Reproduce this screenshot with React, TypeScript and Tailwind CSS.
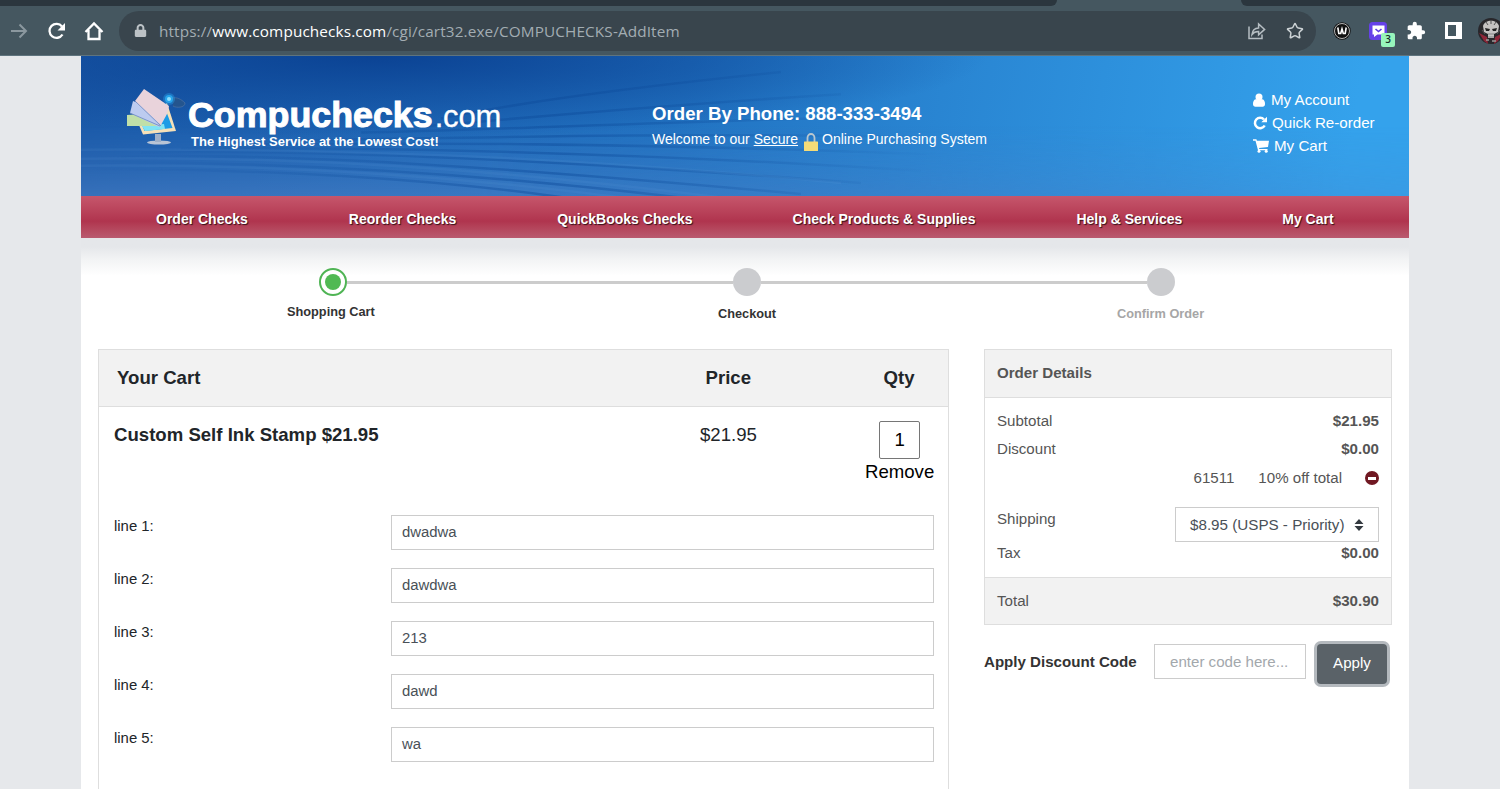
import { Star } from "lucide-react";
import { FaLock } from "react-icons/fa";
import { MdExtension } from "react-icons/md";

const navItems = [
    { label: "Order Checks", margin: "ml-[75px]" },
    { label: "Reorder Checks", margin: "ml-[101px]" },
    { label: "QuickBooks Checks", margin: "ml-[101px]" },
    { label: "Check Products & Supplies", margin: "ml-[100px]" },
    { label: "Help & Services", margin: "ml-[101px]" },
    { label: "My Cart", margin: "ml-[100px]" },
];

const stampLines = [
    { label: "line 1:", value: "dwadwa" },
    { label: "line 2:", value: "dawdwa" },
    { label: "line 3:", value: "213" },
    { label: "line 4:", value: "dawd" },
    { label: "line 5:", value: "wa" },
];

function BrowserBar() {
    return (
        <div className="h-14 border-b border-[#5f747e] bg-[#455760]">
            <div className="flex h-1.5 justify-between">
                <div className="w-[1057px] rounded-br-lg bg-[#2b363e]" />
                <div className="w-[259px] rounded-bl-lg bg-[#2b363e]" />
            </div>
            <div className="flex h-[49px] items-center overflow-hidden pl-2.5">
                <svg viewBox="0 0 18 18" className="size-[18px] shrink-0 fill-none stroke-[#8b989f] stroke-2">
                    <path d="M1 9h15M9.500 2.500L16 9l-6.500 6.500" />
                </svg>
                <svg viewBox="0 0 18 18" className="ml-5 size-[18px] shrink-0">
                    <path d="M14.500 12.500A7 7 0 1 1 14 4.500" fill="none" stroke="#fff" strokeWidth="2.300" />
                    <path d="M17 1v7.500H9.500z" fill="#fff" />
                </svg>
                <svg viewBox="0 0 20 20" className="ml-[18px] size-[20px] shrink-0 fill-none stroke-white stroke-[2.3]">
                    <path d="M1.500 11L10 2.500l8.500 8.500M4.500 9v9h11V9" />
                </svg>
                <div className="ml-[15px] flex h-10 w-[1197px] shrink-0 items-center rounded-full bg-[#39454d] pr-3 pl-[15px]">
                    <FaLock className="size-[13px] shrink-0 text-[#bcc2c6]" />
                    <p className="ml-3 font-['Open_Sans',sans-serif] text-[15.300px] leading-5 tracking-[0.13px] whitespace-nowrap text-[#a3adb3]">
                        https://<span className="font-medium text-white">www.compuchecks.com</span>
                        /cgi/cart32.exe/COMPUCHECKS-AddItem
                    </p>
                    <svg viewBox="0 0 18 18" className="ml-auto size-[18px] fill-none stroke-[#b5bdc2] stroke-[1.5]">
                        <path d="M1 4.500v12h13v-4" />
                        <path d="M4 12.500c.4-4.600 2.700-6.400 6.600-6.600V2l6 5.400-6 5.400V9.400C7.500 9.300 5.600 10.200 4 12.500z" />
                    </svg>
                    <Star className="ml-5 size-[18px] text-[#cdd3d6]" strokeWidth={2} strokeLinejoin="miter" />
                </div>
                <svg viewBox="0 0 18 18" className="ml-[17px] size-[18px] shrink-0">
                    <circle cx="9" cy="9" r="8.700" fill="#111" />
                    <circle cx="9" cy="9" r="7.500" fill="none" stroke="#ddd" strokeWidth=".8" />
                    <path d="M4.800 5.500l1 6h1.900L9 7l1.300 4.500h1.900l1-6" fill="none" stroke="#fff" strokeWidth="1.600" />
                </svg>
                <div className="relative ml-[18px] size-[20px] shrink-0">
                    <svg viewBox="0 0 20 20" className="size-[20px]">
                        <rect x="0" y="1" width="18" height="18" rx="3.500" fill="#6541e8" />
                        <path d="M3.500 4.500h12v9h-7l-3.500 2.500v-2.500h-1.500z" fill="#fff" />
                        <path d="M6.500 8l3 2.500 3-2.500" fill="none" stroke="#5b3be0" strokeWidth="1.600" />
                    </svg>
                    <span className="absolute top-3 left-3 flex h-[14px] w-[14px] items-center justify-center rounded-[2px] bg-[#97f5bb] font-['Open_Sans',sans-serif] text-[10px] font-semibold text-[#16302a]">
                        3
                    </span>
                </div>
                <MdExtension className="ml-[17px] size-[20px] shrink-0 text-white" />
                <div className="ml-[19px] flex h-[17px] w-[17px] shrink-0 border-3 border-white">
                    <div className="ml-auto w-[3px] bg-white" />
                </div>
                <svg viewBox="0 0 26 26" className="ml-4 size-[26px] shrink-0">
                    <circle cx="13" cy="13" r="13" fill="#28272b" />
                    <path d="M1 15l5 8 4 3-1-7zM25 15l-5 8-4 3 1-7z" fill="#8e2638" />
                    <path d="M5 8c2-7 14-7 16 0l-1 6-4 2v4h-6v-4l-4-2z" fill="#c5c3c2" />
                    <path d="M7 10l5 1-1 2-3 0zM19 10l-5 1 1 2 3 0z" fill="#222" />
                    <path d="M8 4l2 3M13 2v4M18 4l-2 3M4 12l3 4M22 12l-3 4" stroke="#555" strokeWidth="1" />
                    <path d="M10 16h6M10 19h6M8 22h3M14 23h4" stroke="#999" strokeWidth="1.500" />
                </svg>
            </div>
        </div>
    );
}

function Waves() {
    return (
        <svg
            viewBox="0 0 1328 139"
            preserveAspectRatio="none"
            className="absolute inset-0 h-full w-full fill-none"
        >
            <defs>
                <linearGradient id="fade" gradientUnits="userSpaceOnUse" x1="0" y1="0" x2="860" y2="0">
                    <stop offset="0" stopColor="#0c4a9a" stopOpacity="0" />
                    <stop offset=".55" stopColor="#0c4a9a" stopOpacity=".45" />
                    <stop offset="1" stopColor="#0c4a9a" stopOpacity="0" />
                </linearGradient>
            </defs>
            <g stroke="url(#fade)" strokeWidth="2.500">
                <path d="M360 62C440 46 540 32 700 16" />
                <path d="M340 70C440 62 560 50 760 38" />
                <path d="M280 76C400 74 560 66 800 60" />
                <path d="M200 84C360 82 560 76 840 80" />
                <path d="M160 88C340 86 540 86 860 98" />
                <path d="M100 92C260 90 520 94 840 114" />
                <path d="M60 96C240 92 480 104 780 126" />
                <path d="M40 100C220 96 440 112 720 137" />
                <path d="M0 106C200 104 400 116 620 143" />
                <path d="M0 113C180 111 360 122 500 143" />
            </g>
            <g stroke="#6ba6e0" strokeOpacity=".1" strokeWidth="2.500">
                <path d="M0 93C240 92 470 98 760 126" />
                <path d="M0 102C220 99 420 112 660 143" />
                <path d="M0 109C200 107 380 119 560 143" />
            </g>
        </svg>
    );
}

function LogoMark() {
    return (
        <svg viewBox="0 0 60 60" className="h-[60px] w-[60px]">
            <ellipse cx="32" cy="53.500" rx="12" ry="2" fill="#b9c5d6" />
            <path d="M28 45h6v8h-6z" fill="#9fb0c8" />
            <path d="M12 36l28-22 9 28-33 3.500z" fill="#f5e0b8" />
            <path d="M15 36l23-17 7.500 20-28 3z" fill="#1c9be6" />
            <path d="M15 37l22-2 1 5-20 2z" fill="#7fe3f5" />
            <path d="M0 26l14-1 20 12H0z" fill="#c0dfa8" />
            <path d="M6 12l15 6 13 18-2 2L3 24z" fill="#bccbf0" />
            <path d="M17 0l25 17-2 8-6 11L8 12z" fill="#e9d3db" />
            <path d="M8 12l26 25M3 24l30 13" stroke="#6a86c0" strokeWidth=".8" />
            <path d="M45 9c5-1 9 1 13 5 0 5-9 5-12 3" fill="#24558e" stroke="#4f72a4" strokeWidth=".7" />
            <circle cx="42" cy="10" r="6" fill="#2bb0f5" opacity=".35" />
            <circle cx="42" cy="10" r="4" fill="#2bb0f5" opacity=".8" />
            <circle cx="42" cy="10" r="2" fill="#8fe0ff" />
        </svg>
    );
}

function Header() {
    return (
        <header className="relative flex h-[140px] bg-linear-[100deg] from-[#1b5aa9] from-0% via-[#2273c2] via-45% to-[#34a2ec] to-95% text-white">
            <div className="absolute inset-0 bg-[radial-gradient(ellipse_at_22%_0%,#0b4394_0%,transparent_42%)]" />
            <div className="absolute inset-0 bg-linear-to-t from-[#4a80c6]/60 from-0% via-[#4a80c6]/30 via-20% to-transparent to-50% [mask-image:linear-gradient(to_right,#000_30%,rgba(0,0,0,0.3))]" />
            <Waves />
            <div className="relative flex w-[571px] pt-[33px] pl-[46px]">
                <LogoMark />
                <div className="pt-1.5 pl-px">
                    <p className="h-[38px] text-[35.800px] leading-[40px] font-bold whitespace-nowrap [-webkit-text-stroke:1px_white]">
                        Compuchecks
                        <span className="ml-0.5 text-[31px] font-normal tracking-[-0.2px] [-webkit-text-stroke:0.3px_white]">
                            .com
                        </span>
                    </p>
                    <p className="pl-[3px] text-[13px] leading-[17px] font-bold whitespace-nowrap">
                        The Highest Service at the Lowest Cost!
                    </p>
                </div>
            </div>
            <div className="relative w-[601px] pt-[47px]">
                <p className="text-[18.650px] leading-[22px] font-bold">Order By Phone: 888-333-3494</p>
                <p className="mt-1 flex text-sm leading-5">
                    <span>
                        Welcome to our <span className="underline">Secure</span>
                    </span>
                    <svg viewBox="0 0 14 18" className="mt-1 mr-1 ml-1.5 h-[18px] w-[14px]">
                        <path d="M3.500 9V5a3.500 4 0 0 1 7 0v4" fill="none" stroke="#b9c7cf" strokeWidth="1.800" />
                        <rect y="8.500" width="14" height="9.500" rx=".5" fill="#f5dc78" />
                    </svg>
                    Online Purchasing System
                </p>
            </div>
            <div className="relative pt-[33px] text-[15.150px] leading-[22.900px]">
                <p className="flex items-center gap-1.5">
                    <svg viewBox="0 0 12 14" className="h-[14px] w-3 fill-white">
                        <circle cx="6" cy="4" r="3.500" />
                        <path d="M2.600 6.300C.8 6.700 0 8.700 0 11c0 1.800 1 2.800 2.400 2.800h7.200C11 13.800 12 12.800 12 11c0-2.300-.8-4.300-2.600-4.700z" />
                    </svg>
                    My Account
                </p>
                <p className="flex items-center gap-[5px]">
                    <svg viewBox="0 0 14 14" className="size-[14px]">
                        <path d="M11.700 9.500A5.200 5.200 0 1 1 11 3.500" fill="none" stroke="#fff" strokeWidth="2.500" />
                        <path d="M14 .8v5.400H8.300z" fill="#fff" />
                    </svg>
                    Quick Re-order
                </p>
                <p className="flex items-center gap-[5px]">
                    <svg viewBox="0 0 16 14" className="h-[14px] w-4 fill-white">
                        <path d="M0 .3h3.400l.5 1.400H16l-1 6.300-9 1 .3 1H14.500v1.300H5L2.500 1.700H0z" />
                        <circle cx="6" cy="12.300" r="1.500" />
                        <circle cx="13.200" cy="12.300" r="1.500" />
                    </svg>
                    My Cart
                </p>
            </div>
        </header>
    );
}

function Steps() {
    return (
        <div className="h-[111px] bg-linear-to-b from-[#e5e7ea] from-8% via-[#f3f4f5] via-20% to-white to-34% pt-[30px]">
            <div className="ml-[237.500px] flex w-[856.500px] items-center">
                <div className="flex size-7 items-center justify-center rounded-full border-2 border-[#4fb454] bg-white">
                    <div className="size-4 rounded-full bg-[#50b953]" />
                </div>
                <div className="h-[3px] flex-1 bg-[#cccccc]" />
                <div className="size-7 rounded-full bg-[#cbcccf]" />
                <div className="h-[3px] flex-1 bg-[#cccccc]" />
                <div className="size-7 rounded-full bg-[#cbcccf]" />
            </div>
            <div className="flex pt-[7px] pl-[206px] text-[12.750px] leading-[18px] font-bold text-[#333]">
                <p className="w-[431px]">Shopping Cart</p>
                <p className="w-[399px] pt-0.5">Checkout</p>
                <p className="pt-0.5 text-[#a6a6a6]">Confirm Order</p>
            </div>
        </div>
    );
}

function Cart() {
    return (
        <section className="h-[460px] w-[851px] border border-[#dedede] text-[#212529]">
            <div className="flex h-[57px] items-center border-b border-[#dedede] bg-[#f2f2f2] pl-[18px] text-[18.600px] font-bold">
                <p className="w-[588.500px]">Your Cart</p>
                <p className="w-[178px]">Price</p>
                <p>Qty</p>
            </div>
            <div className="flex pt-3.5 pl-[15px] text-[18.600px] leading-[26px]">
                <p className="w-[586px] pt-px font-bold">Custom Self Ink Stamp $21.95</p>
                <p className="w-[165px] pt-px">$21.95</p>
                <div className="flex flex-col items-center text-black">
                    <div className="flex h-[38px] w-[41px] items-center justify-center rounded-xs border border-[#767676]">
                        1
                    </div>
                    <p>Remove</p>
                </div>
            </div>
            <div className="flex flex-col gap-[18px] pt-[30px] pr-3.5 pl-[15px] text-[14.900px]">
                {stampLines.map((line) => (
                    <div key={line.label} className="flex h-[35px]">
                        <p className="w-[277px] leading-[22px]">{line.label}</p>
                        <div className="flex-1 border border-[#cccccc] pl-2.5 leading-[33px] text-[#495057]">
                            {line.value}
                        </div>
                    </div>
                ))}
            </div>
        </section>
    );
}

function OrderDetails() {
    return (
        <aside className="w-[408px] text-[15.100px] leading-5 text-[#555]">
            <div className="border border-[#dedede]">
                <h2 className="h-12 border-b border-[#dedede] bg-[#f2f2f2] pt-[13px] pl-3 font-bold">Order Details</h2>
                <div className="h-[179px] px-3 pt-[13px]">
                    <div className="flex h-7 justify-between">
                        <p>Subtotal</p>
                        <p className="font-bold">$21.95</p>
                    </div>
                    <div className="flex h-7 justify-between">
                        <p>Discount</p>
                        <p className="font-bold">$0.00</p>
                    </div>
                    <div className="flex items-center justify-end pt-px">
                        <p>61511</p>
                        <p className="ml-6">10% off total</p>
                        <div className="ml-[23px] flex size-3.5 items-center justify-center rounded-full bg-[#701822]">
                            <div className="h-[3px] w-2 bg-white" />
                        </div>
                    </div>
                    <div className="flex justify-between pt-[19px]">
                        <p className="pt-0.5">Shipping</p>
                        <div className="flex h-[35px] w-[204px] items-center justify-between border border-[#cccccc] pr-3.5 pl-3.5 text-[15.200px] text-[#495057]">
                            $8.95 (USPS - Priority)
                            <svg viewBox="0 0 10 12" className="h-3 w-[10px] fill-[#343a40]">
                                <path d="M5 0l4.500 5h-9zM5 12L.5 7h9z" />
                            </svg>
                        </div>
                    </div>
                    <div className="flex justify-between pt-px">
                        <p>Tax</p>
                        <p className="font-bold">$0.00</p>
                    </div>
                </div>
                <div className="flex h-[47px] items-center justify-between border-t border-[#dedede] bg-[#f2f2f2] px-3">
                    <p>Total</p>
                    <p className="font-bold">$30.90</p>
                </div>
            </div>
            <div className="mt-4 flex pt-[3px]">
                <p className="w-[170px] pt-2 font-bold whitespace-nowrap text-[#333]">Apply Discount Code</p>
                <div className="h-[35px] w-[152px] border border-[#cccccc] pl-[15px] leading-[34px] text-[#a3a8ac]">
                    enter code here...
                </div>
                <button className="ml-[11px] h-10 w-[70px] rounded-[4px] bg-[#5a6268] pb-0.5 text-white ring-[3px] ring-[#b4b9be]">
                    Apply
                </button>
            </div>
        </aside>
    );
}

export default function App() {
    return (
        <div className="h-[789px] w-[1500px] overflow-hidden bg-[#e6e8eb] font-['Liberation_Sans',Arial,sans-serif]">
            <BrowserBar />
            <main className="ml-[81px] h-[733px] w-[1328px] overflow-hidden bg-white">
                <Header />
                <nav className="flex h-[42px] items-center bg-linear-to-b from-[#c6566c] via-[#b0344e] via-60% to-[#b95a6f] text-sm font-bold whitespace-nowrap text-white [text-shadow:1px_1px_1px_#321018]">
                    {navItems.map((item) => (
                        <a key={item.label} className={`${item.margin} pt-1`}>
                            {item.label}
                        </a>
                    ))}
                </nav>
                <Steps />
                <div className="flex items-start gap-[35px] pl-[17px]">
                    <Cart />
                    <OrderDetails />
                </div>
            </main>
        </div>
    );
}
